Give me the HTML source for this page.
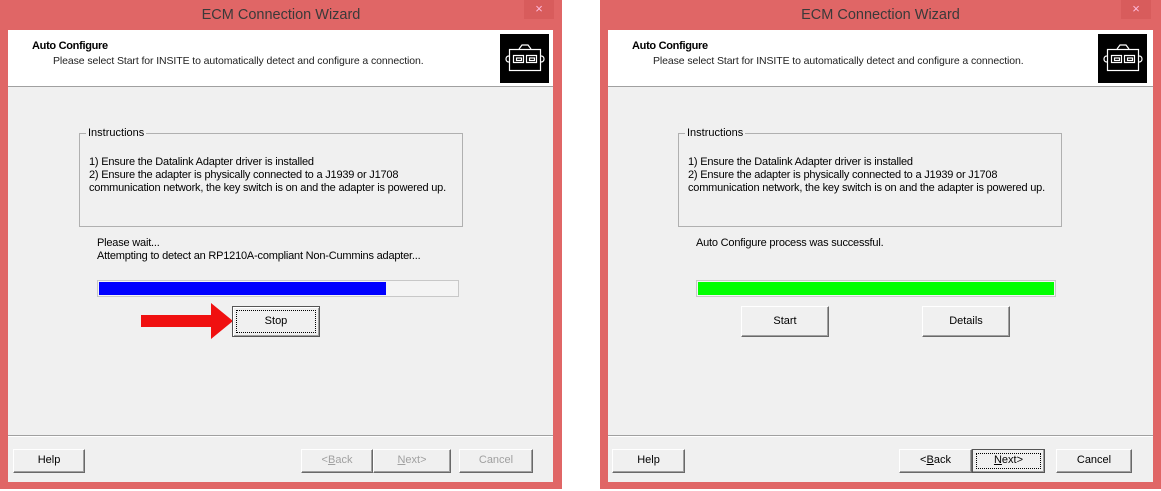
<!DOCTYPE html>
<html><head><meta charset="utf-8"><style>
*{box-sizing:border-box;margin:0;padding:0}
body{width:1161px;height:491px;background:#fff;position:relative;overflow:hidden;font-family:"Liberation Sans",sans-serif;font-size:11px;color:#000}
.win{position:absolute;top:0;width:562px;height:489px;background:#e06666}
.title{position:absolute;top:0;left:0;right:0;height:30px;text-align:center;line-height:30px;font-size:14.5px;color:#3a3a3a}
.close{position:absolute;top:0;right:8px;width:30px;height:19px;background:#d85c5c;color:#fbd;text-align:center;line-height:18px;font-size:13px}
.inner{position:absolute;left:8px;top:30px;width:545px;height:452px;background:#f0f0f0}
.head{position:absolute;left:0;top:0;width:545px;height:57px;background:#fff;border-bottom:1px solid #a0a0a0}
.h1{position:absolute;left:24px;top:10px;font-weight:bold;font-size:11px;letter-spacing:-0.3px}
.h2{position:absolute;left:45px;top:25px;font-size:10.5px;color:#222;letter-spacing:-0.1px}
.icon{position:absolute;left:492px;top:4px;width:49px;height:49px;background:#000}
.t{position:absolute;white-space:nowrap;letter-spacing:-0.2px}
.grp{position:absolute;border:1px solid #b0b0b0;width:384px;height:94px;top:103px}
.grp span{position:absolute;top:-7px;left:6px;background:#f0f0f0;padding:0 2px}
.bar{position:absolute;top:250px;height:17px;width:362px;border:1px solid #c8c8c8;background:#f4f4f4}
.btn{position:absolute;height:24px;background:#f0f0f0;border:1px solid;border-color:#fff #696969 #696969 #fff;box-shadow:inset -1px -1px 0 #a0a0a0;text-align:center;line-height:21px}
.dis{color:#a0a0a0}
.sep{position:absolute;left:0;width:545px;top:405px;border-top:1px solid #a0a0a0;border-bottom:1px solid #fff}
</style></head><body>

<div class="win" style="left:0">
<div class="title">ECM Connection Wizard</div><div class="close">×</div>
<div class="inner">
<div class="head"><div class="h1">Auto Configure</div><div class="h2">Please select Start for INSITE to automatically detect and configure a connection.</div>
<div class="icon"><svg width="49" height="49" viewBox="0 0 49 49" fill="none" stroke="#fff" stroke-width="1.2"><rect x="9.5" y="15.5" width="31" height="21"/><rect x="13.5" y="21.5" width="10" height="7"/><rect x="26.5" y="21.5" width="10" height="7"/><rect x="16.5" y="24" width="5" height="2.5"/><rect x="29.5" y="24" width="5" height="2.5"/><path d="M19 15 L22 11 H28 L31 15 M9 22 C5 22 5 28 9 28 M41 22 C45 22 45 28 41 28"/></svg></div></div>
<div class="grp" style="left:71px"><span>Instructions</span>
<div class="t" style="left:9px;top:22px;line-height:13px">1) Ensure the Datalink Adapter driver is installed<br>2) Ensure the adapter is physically connected to a J1939 or J1708<br>communication network, the key switch is on and the adapter is powered up.</div></div>
<div class="t" style="left:89px;top:207px;line-height:13px">Please wait...<br>Attempting to detect an RP1210A-compliant Non-Cummins adapter...</div>
<div class="bar" style="left:89px"><div style="position:absolute;left:1px;top:1px;width:287px;height:13px;background:#0000ff"></div></div>
<svg style="position:absolute;left:133px;top:273px" width="92" height="36"><polygon points="0,12 70,12 70,0 92,18 70,36 70,24 0,24" fill="#f01010"/></svg>
<div class="btn" style="left:224px;top:276px;width:88px;height:31px;border:1px solid #555;box-shadow:inset 1px 1px 0 #fff,inset -1px -1px 0 #a0a0a0;line-height:28px"><div style="position:absolute;left:3px;top:3px;right:3px;bottom:3px;border:1px dotted #000"></div>Stop</div>
<div class="sep"></div>
<div class="btn" style="left:5px;top:419px;width:72px">Help</div>
<div class="btn dis" style="left:293px;top:419px;width:72px">&lt;<u>B</u>ack</div>
<div class="btn dis" style="left:365px;top:419px;width:78px"><u>N</u>ext&gt;</div>
<div class="btn dis" style="left:451px;top:419px;width:74px">Cancel</div>
</div></div>

<div class="win" style="left:600px;width:561px">
<div class="title">ECM Connection Wizard</div><div class="close" style="right:10px">×</div>
<div class="inner">
<div class="head"><div class="h1">Auto Configure</div><div class="h2">Please select Start for INSITE to automatically detect and configure a connection.</div>
<div class="icon" style="left:490px"><svg width="49" height="49" viewBox="0 0 49 49" fill="none" stroke="#fff" stroke-width="1.2"><rect x="9.5" y="15.5" width="31" height="21"/><rect x="13.5" y="21.5" width="10" height="7"/><rect x="26.5" y="21.5" width="10" height="7"/><rect x="16.5" y="24" width="5" height="2.5"/><rect x="29.5" y="24" width="5" height="2.5"/><path d="M19 15 L22 11 H28 L31 15 M9 22 C5 22 5 28 9 28 M41 22 C45 22 45 28 41 28"/></svg></div></div>
<div class="grp" style="left:70px"><span>Instructions</span>
<div class="t" style="left:9px;top:22px;line-height:13px">1) Ensure the Datalink Adapter driver is installed<br>2) Ensure the adapter is physically connected to a J1939 or J1708<br>communication network, the key switch is on and the adapter is powered up.</div></div>
<div class="t" style="left:88px;top:207px">Auto Configure process was successful.</div>
<div class="bar" style="left:88px;width:360px"><div style="position:absolute;left:1px;top:1px;width:356px;height:13px;background:#00ff00"></div></div>
<div class="btn" style="left:133px;top:276px;width:88px;height:31px;line-height:28px">Start</div>
<div class="btn" style="left:314px;top:276px;width:88px;height:31px;line-height:28px">Details</div>
<div class="sep"></div>
<div class="btn" style="left:4px;top:419px;width:73px">Help</div>
<div class="btn" style="left:291px;top:419px;width:73px">&lt;<u>B</u>ack</div>
<div class="btn" style="left:364px;top:419px;width:73px;border:1px solid #555"><div style="position:absolute;left:3px;top:3px;right:3px;bottom:3px;border:1px dotted #000"></div><u>N</u>ext&gt;</div>
<div class="btn" style="left:448px;top:419px;width:76px">Cancel</div>
</div></div>
</body></html>
